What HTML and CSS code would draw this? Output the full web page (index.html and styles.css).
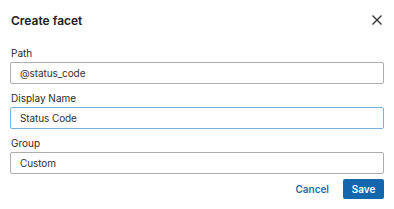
FILE: index.html
```html
<!DOCTYPE html>
<html>
<head>
<meta charset="utf-8">
<link rel="stylesheet" href="styles.css">
</head>
<body>
<div class="dialog">
  <div class="header">
    <h1 class="title">Create facet</h1>
    <button class="close" aria-label="Close">
      <svg width="12" height="12" viewBox="0 0 12 12"><path d="M1.5 1.5 L10.5 10.5 M10.5 1.5 L1.5 10.5" stroke="#333" stroke-width="1.4" fill="none"/></svg>
    </button>
  </div>
  <div class="fields">
    <div class="field">
      <label class="label">Path</label>
      <div class="input"><span class="value">@status_code</span></div>
    </div>
    <div class="field">
      <label class="label">Display Name</label>
      <div class="input focused"><span class="value">Status Code</span></div>
    </div>
    <div class="field">
      <label class="label">Group</label>
      <div class="input"><span class="value">Custom</span></div>
    </div>
  </div>
  <div class="footer">
    <button class="btn cancel">Cancel</button>
    <button class="btn save">Save</button>
  </div>
</div>
</body>
</html>
```
FILE: styles.css
```css
* { box-sizing: border-box; }
html, body { margin: 0; padding: 0; background: #fff; }
body { font-family: Inter, "Noto Sans", "Liberation Sans", sans-serif; color: #28292b; }
.dialog { width: 394px; height: 209px; padding: 11px 10px 10px 10px; display: flex; flex-direction: column; }
.header { display: flex; justify-content: space-between; align-items: flex-start; height: 35px; }
.title { margin: 0 0 0 1px; font-size: 12px; line-height: 20px; font-weight: 600; color: #202124; }
.close { border: 0; background: none; padding: 0; width: 12px; height: 12px; margin-top: 3px; margin-right: 1px; display: flex; align-items: center; justify-content: center; }
.fields { display: flex; flex-direction: column; gap: 7px; }
.field { display: flex; flex-direction: column; gap: 2px; }
.label { font-size: 10px; line-height: 14px; font-weight: 400; color: #2a2b2e; padding-left: 1px; }
.input { height: 22px; border: 1px solid #adadad; border-radius: 2px; padding: 0 0 0 9px; font-size: 10px; line-height: 20px; color: #333; background: #fff; display: flex; align-items: center; letter-spacing: -0.1px; }
.input.focused { border-color: #76b3dd; }
.footer { display: flex; justify-content: flex-end; align-items: center; gap: 14px; margin-top: 5px; }
.btn { font-family: inherit; font-size: 10px; font-weight: 600; border: 0; height: 20px; border-radius: 2px; }
.cancel { background: none; color: #1f6cb0; padding: 0; }
.save { background: #1466ad; color: #fff; padding: 0; width: 41px; }
```
